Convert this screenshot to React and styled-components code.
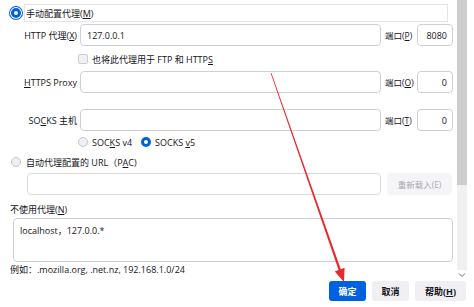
import React from 'react'
import styled, { createGlobalStyle } from 'styled-components';

const GlobalStyle = createGlobalStyle`
  html, body {
    margin: 0;
    padding: 0;
    background: #fff;
  }
  body {
    font-family: "Open Sans", "Noto Sans CJK SC", sans-serif;
    font-size: 9px;
    color: #15141a;
  }
`;

function App() {
  return (
    <>
      <GlobalStyle />
      <Page>
        <Main>
          <Content>
            <TopRow>
              <Radio checked focused />
              <FocusLabel>手动配置代理(<u>M</u>)</FocusLabel>
            </TopRow>

            <FieldRow top={2}>
              <FieldLabel>HTTP 代理(<u>X</u>)</FieldLabel>
              <TextBox>127.0.0.1</TextBox>
              <PortLabel>端口(<u>P</u>)</PortLabel>
              <PortBox>8080</PortBox>
            </FieldRow>

            <CheckRow>
              <Checkbox />
              <span>也将此代理用于 FTP 和 HTTP<u>S</u></span>
            </CheckRow>

            <FieldRow top={7}>
              <FieldLabel><u>H</u>TTPS Proxy</FieldLabel>
              <TextBox />
              <PortLabel>端口(<u>O</u>)</PortLabel>
              <PortBox>0</PortBox>
            </FieldRow>

            <FieldRow top={16}>
              <FieldLabel>SO<u>C</u>KS 主机</FieldLabel>
              <TextBox />
              <PortLabel>端口(<u>T</u>)</PortLabel>
              <PortBox>0</PortBox>
            </FieldRow>

            <VersionRow>
              <Option>
                <Radio />
                <span>SOC<u>K</u>S v4</span>
              </Option>
              <Option>
                <Radio checked />
                <span>SOCKS <u>v</u>5</span>
              </Option>
            </VersionRow>

            <PacRow>
              <Radio />
              <span>自动代理配置的 URL（P<u>A</u>C)</span>
            </PacRow>

            <PacInputRow>
              <PacBox />
              <ReloadButton>重新载入(E)</ReloadButton>
            </PacInputRow>

            <SectionLabel>不使用代理(<u>N</u>)</SectionLabel>
            <NoProxyBox>localhost，127.0.0.*</NoProxyBox>
            <Hint>例如：.mozilla.org, .net.nz, 192.168.1.0/24</Hint>
          </Content>

          <Scrollbar>
            <Thumb />
            <Track />
            <Chevron>
              <svg width="8" height="6" viewBox="0 0 8 6">
                <path d="M1 1.5 L4 4.5 L7 1.5" fill="none" stroke="#6b6b70" strokeWidth="1" />
              </svg>
            </Chevron>
          </Scrollbar>
        </Main>

        <Footer>
          <DialogButton primary>确定</DialogButton>
          <DialogButton>取消</DialogButton>
          <DialogButton wide>帮助(<u>H</u>)</DialogButton>
        </Footer>

        <Annotation width="474" height="307" viewBox="0 0 474 307">
          <polygon
            points="270.6,73.1 271.4,72.9 340.8,269.3 344.6,267.8 344,282 334.8,271.6 338.6,270.1"
            fill="#e8282b"
          />
        </Annotation>
      </Page>
    </>
  );
}

export default App;

const Page = styled.div`
  position: relative;
  width: 474px;
  height: 307px;
  overflow: hidden;
  background: #fff;
`;

const Main = styled.div`
  display: flex;
  height: 280px;
`;

const Content = styled.div`
  width: 457px;
  display: flex;
  flex-direction: column;
`;

const Radio = styled.span`
  flex: none;
  box-sizing: border-box;
  width: 10px;
  height: 10px;
  border-radius: 50%;
  border: ${(p) => (p.checked ? '3px solid #0061e0' : '1px solid #c4c4cb')};
  background: ${(p) => (p.checked ? '#fff' : '#f0f0f4')};
  box-shadow: ${(p) => (p.focused ? '0 0 0 1px #fff, 0 0 0 2px #0061e0' : 'none')};
`;

const TopRow = styled.div`
  display: flex;
  align-items: center;
  margin-top: 4px;
  height: 18px;
  padding-left: 11px;
  gap: 3px;
`;

const FocusLabel = styled.div`
  box-sizing: border-box;
  width: 424px;
  height: 18px;
  display: flex;
  align-items: center;
  padding-left: 1px;
  border: 1px solid #e3e3e8;
`;

const FieldRow = styled.div`
  display: flex;
  align-items: center;
  height: 22px;
  margin-top: ${(p) => p.top}px;
`;

const FieldLabel = styled.div`
  width: 77px;
  text-align: right;
  white-space: nowrap;
`;

const TextBox = styled.div`
  box-sizing: border-box;
  width: 301px;
  height: 22px;
  margin-left: 3px;
  border: 1px solid #cfcfd8;
  border-radius: 4px;
  padding: 0 6px;
  display: flex;
  align-items: center;
`;

const PortLabel = styled.div`
  width: 29px;
  margin-left: 4px;
  white-space: nowrap;
  font-size: 8.5px;
`;

const PortBox = styled.div`
  box-sizing: border-box;
  width: 36px;
  height: 22px;
  margin-left: 3px;
  border: 1px solid #cfcfd8;
  border-radius: 4px;
  padding: 0 5px;
  display: flex;
  align-items: center;
  justify-content: flex-end;
`;

const CheckRow = styled.div`
  display: flex;
  align-items: center;
  gap: 4px;
  height: 10px;
  margin-top: 8px;
  padding-left: 78px;
`;

const Checkbox = styled.span`
  box-sizing: border-box;
  width: 10px;
  height: 10px;
  border: 1px solid #cdcdd3;
  border-radius: 2px;
  background: #f0f0f4;
`;

const VersionRow = styled.div`
  display: flex;
  align-items: center;
  gap: 9px;
  height: 10px;
  margin-top: 6px;
  padding-left: 78px;
`;

const Option = styled.div`
  display: flex;
  align-items: center;
  gap: 4px;
`;

const PacRow = styled.div`
  display: flex;
  align-items: center;
  gap: 5px;
  height: 10px;
  margin-top: 10px;
  padding-left: 11px;
`;

const PacInputRow = styled.div`
  display: flex;
  align-items: center;
  gap: 6px;
  margin-top: 6px;
  padding-left: 27px;
`;

const PacBox = styled.div`
  box-sizing: border-box;
  width: 354px;
  height: 22px;
  border: 1px solid #d8d8de;
  border-radius: 4px;
`;

const ReloadButton = styled.div`
  width: 65px;
  height: 22px;
  border-radius: 4px;
  background: #f5f5f7;
  color: #a8a8ae;
  display: flex;
  align-items: center;
  justify-content: center;
  font-size: 8.5px;
`;

const SectionLabel = styled.div`
  height: 12px;
  line-height: 12px;
  margin-top: 9px;
  padding-left: 10px;
`;

const NoProxyBox = styled.div`
  box-sizing: border-box;
  width: 440px;
  height: 44px;
  margin: 2px 0 0 13px;
  border: 1px solid #cfcfd8;
  border-radius: 4px;
  padding: 6px 6px;
  line-height: 12px;
`;

const Hint = styled.div`
  height: 12px;
  line-height: 12px;
  margin-top: 2px;
  padding-left: 10px;
`;

const Scrollbar = styled.div`
  width: 10px;
  display: flex;
  flex-direction: column;
`;

const Thumb = styled.div`
  height: 185px;
  background: #cdcdcd;
`;

const Track = styled.div`
  flex: 1;
  background: #f0f0f0;
`;

const Chevron = styled.div`
  height: 10px;
  display: flex;
  align-items: center;
  justify-content: center;
`;

const Footer = styled.div`
  display: flex;
  justify-content: flex-end;
  gap: 6px;
  padding: 1px 8px 0 0;
`;

const DialogButton = styled.div`
  width: ${(p) => (p.wide ? '51px' : '37px')};
  height: 20px;
  border-radius: 3px;
  display: flex;
  align-items: center;
  justify-content: center;
  font-weight: bold;
  font-size: 9px;
  background: ${(p) => (p.primary ? '#0061e0' : '#f0f0f4')};
  color: ${(p) => (p.primary ? '#fff' : '#15141a')};
`;

const Annotation = styled.svg`
  position: absolute;
  left: 0;
  top: 0;
  pointer-events: none;
`;
